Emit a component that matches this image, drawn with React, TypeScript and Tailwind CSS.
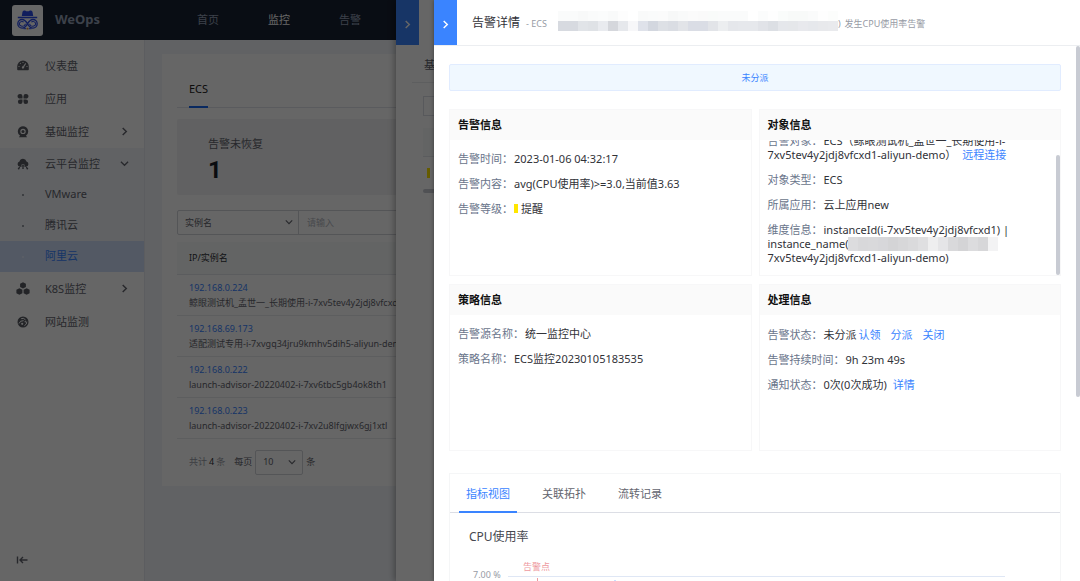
import React from "react";

const ChevronRight = ({ className = "" }: { className?: string }) => (
  <svg viewBox="0 0 10 10" className={className} fill="none" stroke="currentColor" strokeWidth="1.6">
    <path d="M3 1l4 4-4 4" />
  </svg>
);

const ChevronDown = ({ className = "" }: { className?: string }) => (
  <svg viewBox="0 0 10 10" className={className} fill="none" stroke="currentColor" strokeWidth="1.4">
    <path d="M1 3l4 4 4-4" />
  </svg>
);

const Logo = () => (
  <svg viewBox="0 0 31 31" className="size-[31px] rounded-[3px] bg-white">
    <path d="M10.500 6.800q1-1.800 2.600-1.200l1.200.6h2.400l1.200-.6q1.600-.6 2.600 1.200l.7 4.200H9.800z" fill="#2b4be8" />
    <path d="M5.800 11.800h19.400v1.500H5.800z" fill="#2b4be8" />
    <g fill="none" stroke="#2b4be8" strokeWidth="1.300">
      <path d="M15.500 18.800c-1.800-3-3.400-4.300-5.400-4.300a4.300 4.300 0 0 0 0 8.600c2 0 3.600-1.300 5.400-4.300s3.400-4.300 5.400-4.300a4.300 4.300 0 0 1 0 8.600c-2 0-3.600-1.300-5.400-4.300z" />
      <path d="M13.300 18.800a3 2.300 0 1 1-1.600-1.900M17.700 18.800a3 2.300 0 1 0 1.600-1.900" strokeWidth="1.100" />
      <path d="M11.500 23.700h2.800M16.700 23.700h2.800" strokeWidth="1" />
    </g>
    <circle cx="15.500" cy="23.700" r=".9" fill="#e8912b" />
  </svg>
);

const GaugeIcon = () => (
  <svg viewBox="0 0 12 12" className="size-3" fill="currentColor">
    <path
      fillRule="evenodd"
      d="M6 .5A5.800 5.800 0 0 0 .2 6.300v3.200q0 .8.800.8h10q.8 0 .8-.8V6.300A5.800 5.800 0 0 0 6 .5zM5.500 1.900h1v1h-1zM2.700 3.400l.7-.7.7.7-.7.7zM1.500 6.100h1v1h-1zM9.500 6.100h1v1h-1zM8.400 3l.7.7-2 3.200a1.200 1.200 0 1 1-1-.7z"
    />
  </svg>
);

const AppsIcon = () => (
  <svg viewBox="0 0 12 12" className="size-3" fill="currentColor">
    <path d="M3.300 1A2.300 2.300 0 1 0 3.300 5.500H5.500V3.300A2.300 2.300 0 0 0 3.300 1zM8.700 1A2.300 2.300 0 0 0 6.500 3.300V5.500H8.700A2.300 2.300 0 1 0 8.700 1zM3.300 6.500A2.300 2.300 0 1 0 5.500 8.700V6.500zM6.500 6.500V8.700A2.300 2.300 0 1 0 8.700 6.500z" />
  </svg>
);

const CameraIcon = () => (
  <svg viewBox="0 0 12 12" className="size-3" fill="currentColor">
    <path
      fillRule="evenodd"
      d="M6 .2a5.200 5.200 0 0 0-3 9.400l-1 1.600h8L9 9.600A5.200 5.200 0 0 0 6 .2zM6 2.700a2.700 2.700 0 1 1 0 5.400 2.700 2.700 0 0 1 0-5.400z"
    />
    <circle cx="6" cy="5.400" r="1.500" />
  </svg>
);

const CloudIcon = () => (
  <svg viewBox="0 0 12 12" className="size-3" fill="currentColor">
    <path d="M6 .8a3.600 3.600 0 0 0-3.500 2.700A2.600 2.600 0 0 0 2.900 8.600h6.200a2.600 2.600 0 0 0 .4-5.100A3.600 3.600 0 0 0 6 .8z" />
    <path d="M3.500 8L1.500 10.800M8.500 8l2 2.800M6 8v2.500" stroke="currentColor" strokeWidth="1" />
    <circle cx="1.700" cy="10.500" r=".9" />
    <circle cx="10.300" cy="10.500" r=".9" />
    <circle cx="6" cy="10.300" r=".8" />
    <path d="M4 7.400q2-1.800 4 0" stroke="#fff" strokeWidth=".7" fill="none" />
  </svg>
);

const HexIcon = () => (
  <svg viewBox="0 0 14 13" className="h-[13px] w-[14px]" fill="currentColor">
    <path d="M7 .2l2.900 1.600v3.200L7 6.600 4.100 5V1.800zM3.400 6.200l3 1.600v3.400l-3 1.600-3-1.600V7.800zM10.600 6.200l3 1.600v3.400l-3 1.600-3-1.600V7.800z" />
  </svg>
);

const GlobeIcon = () => (
  <svg viewBox="0 0 12 12" className="size-3">
    <circle cx="6" cy="6" r="5.500" fill="currentColor" />
    <path
      d="M4.200 2.600Q7 1.600 8.600 4M2 7.500Q3 4.500 6.600 4.600M7.400 9.700Q10 8.500 9.800 5.600"
      fill="none"
      stroke="#fff"
      strokeWidth="1"
    />
    <circle cx="5.200" cy="7.800" r="1.100" fill="#fff" />
    <circle cx="8.300" cy="5.800" r=".8" fill="#fff" />
  </svg>
);

type RowProps = { icon: React.ReactNode; label: string; arrow?: React.ReactNode; tall?: boolean };
const NavRow = ({ icon, label, arrow, tall = true }: RowProps) => (
  <a href="#" className={`flex items-center pr-[15px] pl-[16px] ${tall ? "h-[33px]" : "h-[31px]"}`}>
    <span className="flex w-[14px] justify-center text-[#585b63]">{icon}</span>
    <span className="ml-[15px] flex-1 pt-px">{label}</span>
    {arrow}
  </a>
);

const SubRow = ({ label, active = false }: { label: string; active?: boolean }) => (
  <a
    href="#"
    className={`flex h-[31px] items-center pl-[16px] ${active ? "bg-[#cfdffb] text-[#3a84ff]" : ""}`}
  >
    <span className="flex w-[14px] justify-center">
      <span className={`size-[2px] rounded-full ${active ? "bg-[#e9f0ff]" : "bg-[#7b7f88]"}`} />
    </span>
    <span className="ml-[15px]">{label}</span>
  </a>
);

const instances = [
  ["192.168.0.224", "鲸眼测试机_孟世一_长期使用-i-7xv5tev4y2jdj8vfcxd1-aliyun-demo"],
  ["192.168.69.173", "适配测试专用-i-7xvgq34jru9kmhv5dih5-aliyun-demo"],
  ["192.168.0.222", "launch-advisor-20220402-i-7xv6tbc5gb4ok8th1"],
  ["192.168.0.223", "launch-advisor-20220402-i-7xv2u8lfgjwx6gj1xtl"],
];

const Card = ({ title, children }: { title: string; children: React.ReactNode }) => (
  <section className="flex h-[167px] flex-col border border-[#f7f7f8]">
    <h2 className="flex h-[30px] shrink-0 items-center bg-[#fafafa] px-2 pt-px font-bold text-[#111]">{title}</h2>
    {children}
  </section>
);

const Field = ({ label, children }: { label: string; children: React.ReactNode }) => (
  <div className="leading-[14px] text-[#313238]">
    <span className="mr-px text-[#69748a]">{label}：</span>
    {children}
  </div>
);

const Link = ({ children }: { children: React.ReactNode }) => (
  <a href="#" className="text-[#3a84ff]">
    {children}
  </a>
);

const Mosaic = ({ rows, size }: { rows: string[][]; size: string }) => (
  <span className="flex flex-col" aria-hidden="true">
    {rows.map((row, y) => (
      <span key={y} className="flex">
        {row.map((c, x) => (
          <span key={x} className={size} style={{ backgroundColor: c }} />
        ))}
      </span>
    ))}
  </span>
);

const titleMosaic = [
  "#fafbfb #fafbfb #f8f9f9 #fafbfb #fbfcfc #f9fafa #fdfdfd #ffffff #f9fafa #fafbfb #fbfbfb #f7f8f8 #f9fafa #fbfbfb #fafafa #f9fbfa #fafbfb #fafbfb #fafbfb #ffffff #fbfcfc #fefefe #fafcfb #f8faf9 #f8faf9 #fafbfb #fefefe #fcfdfc".split(" "),
  "#d7dae0 #d7dae0 #e1e4e8 #dfe2e6 #e9ebef #d5d7dc #e6e8ec #f7f7f9 #dfe2ea #d3d7df #dde0e5 #dadde3 #e2e4e8 #dadde5 #dadde5 #e2e4e8 #eceef0 #e5e7eb #e6e8ec #e6e8ec #e1e3e8 #dcdfe4 #e5e7eb #e5e7ea #e8e9ed #e6e8ec #e8e9ec #e9eaed".split(" "),
];

const nameMosaic = [
  "#dcdcde #d8d8da #d9d9db #d7d7da #d4d4d6 #d7d7d9 #dadadc #dfdfe1 #eeeeef #e5e5e7 #d9d9db #d4d4d6 #dcdcde #d7d7d9 #f3f3f4".split(" "),
];

export default function App() {
  return (
    <div className="relative h-screen overflow-hidden bg-[#f3f6fb] font-['Noto_Sans','Noto_Sans_CJK_SC',sans-serif] text-[11px] text-[#63656e]">
      <div className="flex h-full flex-col">
        <header className="flex h-10 shrink-0 items-center bg-[#182132] pl-3 text-[#96a2b9]">
          <Logo />
          <strong className="ml-3 w-[142px] text-[13px]">WeOps</strong>
          <nav className="flex gap-[49px] pt-px">
            <a href="#">首页</a>
            <a href="#" className="text-white">监控</a>
            <a href="#">告警</a>
          </nav>
        </header>
        <div className="flex min-h-0 flex-1">
          <aside className="flex w-[145px] shrink-0 flex-col border-r border-[#e6e9f0] bg-white pt-[9px]">
            <NavRow icon={<GaugeIcon />} label="仪表盘" />
            <NavRow icon={<AppsIcon />} label="应用" />
            <NavRow icon={<CameraIcon />} label="基础监控" arrow={<ChevronRight className="size-[9px]" />} />
            <div className="bg-[#f3f6fb]">
              <NavRow icon={<CloudIcon />} label="云平台监控" tall={false} arrow={<ChevronDown className="size-[9px]" />} />
              <SubRow label="VMware" />
              <SubRow label="腾讯云" />
              <SubRow label="阿里云" active />
            </div>
            <NavRow icon={<HexIcon />} label="K8S监控" arrow={<ChevronRight className="size-[9px]" />} />
            <NavRow icon={<GlobeIcon />} label="网站监测" />
            <button className="mt-auto mb-[15px] ml-[16px] w-3" aria-label="收起">
              <svg viewBox="0 0 12 12" className="size-3" fill="none" stroke="currentColor" strokeWidth="1.400">
                <path d="M1.500 2.500v7M11.500 6H4M7 3L4 6l3 3" />
              </svg>
            </button>
          </aside>
          <main className="min-w-0 flex-1 overflow-hidden pt-[14px] pr-4 pl-[17px]">
            <div className="bg-white px-[15px] pt-[23px] pb-[11px]">
              <div className="flex border-b border-[#e2e4ea] pl-3">
                <button className="-mb-px h-[31px] border-b-2 border-[#1768ef] pb-1 text-[#222]">ECS</button>
              </div>
              <div className="mt-[11px] h-[76px] rounded-[2px] bg-[#f2f2f4] px-[31px] pt-[17px]">
                <div className="leading-4">告警未恢复</div>
                <div className="mt-1 font-['Roboto',sans-serif] text-[24px] leading-7 font-bold text-[#1b1f29]">1</div>
              </div>
              <div className="mt-[15px] flex text-[9px]">
                <div className="relative w-[122px]">
                  <select aria-label="搜索字段" className="h-[25px] w-full appearance-none rounded-l-[2px] border border-[#d2d4da] px-[7px]">
                    <option>实例名</option>
                  </select>
                  <ChevronDown className="pointer-events-none absolute top-2 right-[6px] size-[8px]" />
                </div>
                <input aria-label="关键字" placeholder="请输入" className="-ml-px h-[25px] flex-1 border border-[#d2d4da] px-2 placeholder:text-[#b4b7c0]" />
              </div>
              <table className="mt-[7px] w-full table-fixed text-left text-[9px]">
                <thead>
                  <tr className="h-8 border-b border-[#e4e6eb] bg-[#f8fbfa] text-[#313238]">
                    <th className="pl-3 font-normal">IP/实例名</th>
                  </tr>
                </thead>
                <tbody>
                  {instances.map(([ip, name]) => (
                    <tr key={ip} className="h-[41px] border-b border-[#e8eaee]">
                      <td className="overflow-hidden pl-3 leading-[15px] whitespace-nowrap">
                        <a href="#" className="block text-[#3a84ff]">{ip}</a>
                        {name}
                      </td>
                    </tr>
                  ))}
                </tbody>
              </table>
              <div className="mt-[11px] flex items-center pl-3 text-[9px]">
                <span className="text-[#979ba5]">共计<span className="px-[2px] text-[#313238]">4</span>条</span>
                <label htmlFor="page-size" className="mr-[3px] ml-[9px]">每页</label>
                <div className="relative">
                  <select id="page-size" className="h-[25px] w-12 appearance-none rounded-[2px] border border-[#d2d4da] px-[7px]">
                    <option>10</option>
                  </select>
                  <ChevronDown className="pointer-events-none absolute top-2 right-[7px] size-[8px]" />
                </div>
                <span className="ml-[3px]">条</span>
              </div>
            </div>
          </main>
        </div>
      </div>

      <div className="absolute inset-y-0 right-0 left-[396px] bg-white shadow-[-2px_0_6px_rgba(0,0,0,0.3)]">
        <button className="flex h-[45px] w-[23px] items-center justify-center bg-[#3a84ff] pt-1 text-white" aria-label="关闭基本信息">
          <ChevronRight className="size-[9px]" />
        </button>
        <div className="ml-4 border-b border-[#e8eaee] pt-3 pb-[9px] pl-[12px] leading-4">基本信息</div>
        <div className="pl-[27px]">
          <div className="mt-[13px] h-5 border border-[#dcdee5]" />
          <div className="mt-3 h-[29px] border-b border-[#e4e6eb] bg-[#f8fbfa]" />
          <div className="mt-[11px] ml-1 h-[10px] w-[3px] bg-[#ffe600]" />
          <div className="mt-[11px] h-1 rounded-full bg-[#c8cbd3]" />
        </div>
      </div>

      <div className="absolute inset-0 bg-black/60" />

      <div role="dialog" aria-label="告警详情" className="absolute inset-y-0 right-0 left-[434px] flex flex-col bg-white shadow-[0_0_4px_rgba(0,0,0,0.4)]">
        <header className="flex h-[46px] shrink-0 items-center border-b border-[#eceef1]">
          <button className="flex h-[45px] w-[23px] items-center justify-center bg-[#3a84ff] pt-1 text-white" aria-label="关闭告警详情">
            <ChevronRight className="size-[9px]" />
          </button>
          <h1 className="ml-[15px] pt-px text-[12px] text-[#313238]">告警详情</h1>
          <span className="ml-[6px] pt-[2px] text-[9px] text-[#979ba5]">- ECS</span>
          <span className="ml-[11px] pb-[3px]">
            <Mosaic rows={titleMosaic} size="size-[10px]" />
          </span>
          <span className="pt-[2px] text-[9px] text-[#979ba5]">)</span>
          <span className="ml-1 pt-[2px] text-[9px] text-[#979ba5]">发生CPU使用率告警</span>
        </header>
        <div className="relative min-h-0 flex-1 overflow-hidden pt-[18px] pr-[19px] pl-[15px]">
          <div className="flex h-[27px] items-center justify-center rounded-[2px] border border-[#e1ecff] bg-[#f0f8ff] text-[9px] text-[#3a84ff]">
            未分派
          </div>
          <div className="mt-[18px] grid grid-cols-2 gap-x-[7px] gap-y-2">
            <Card title="告警信息">
              <div className="flex flex-col gap-[11px] px-2 pt-3">
                <Field label="告警时间">2023-01-06 04:32:17</Field>
                <Field label="告警内容">avg(CPU使用率)&gt;=3.0,当前值3.63</Field>
                <Field label="告警等级">
                  <span className="mr-[3px] inline-block h-[9px] w-[4px] bg-[#ffe600]" />
                  提醒
                </Field>
              </div>
            </Card>
            <Card title="对象信息">
              <div className="relative flex min-h-0 flex-1 flex-col justify-end gap-[11px] overflow-hidden px-2 pb-[10px]">
                <Field label="告警对象">
                  ECS（鲸眼测试机_孟世一_长期使用-i-
                  <br />
                  7xv5tev4y2jdj8vfcxd1-aliyun-demo）
                  <span className="ml-[6px]"><Link>远程连接</Link></span>
                </Field>
                <Field label="对象类型">ECS</Field>
                <Field label="所属应用">云上应用new</Field>
                <Field label="维度信息">
                  instanceId(i-7xv5tev4y2jdj8vfcxd1) |
                  <br />
                  <span className="flex items-center">
                    instance_name(
                    <Mosaic rows={nameMosaic} size="h-[14px] w-[10px]" />
                  </span>
                  7xv5tev4y2jdj8vfcxd1-aliyun-demo)
                </Field>
                <div className="absolute right-0 bottom-0 h-[120px] w-1 rounded-full bg-[#c8cbd3]" />
              </div>
            </Card>
            <Card title="策略信息">
              <div className="flex flex-col gap-[11px] px-2 pt-3">
                <Field label="告警源名称">统一监控中心</Field>
                <Field label="策略名称">ECS监控20230105183535</Field>
              </div>
            </Card>
            <Card title="处理信息">
              <div className="flex flex-col gap-[11px] px-2 pt-[13px]">
                <Field label="告警状态">
                  未分派
                  <span className="ml-[2px] inline-flex gap-[10px]">
                    <Link>认领</Link>
                    <Link>分派</Link>
                    <Link>关闭</Link>
                  </span>
                </Field>
                <Field label="告警持续时间">9h 23m 49s</Field>
                <Field label="通知状态">
                  0次(0次成功)
                  <span className="ml-[6px]"><Link>详情</Link></span>
                </Field>
              </div>
            </Card>
          </div>
          <section className="mt-[22px] border border-[#f5f6f7]">
            <div role="tablist" className="flex gap-[18px] border-b border-[#dcdee5] pl-[9px]">
              <button role="tab" aria-selected="true" className="-mb-px h-[39px] border-b-2 border-[#3a84ff] px-[7px] pt-[3px] text-[#3a84ff]">
                指标视图
              </button>
              <button role="tab" aria-selected="false" className="px-[7px] pt-[3px]">关联拓扑</button>
              <button role="tab" aria-selected="false" className="px-[7px] pt-[3px]">流转记录</button>
            </div>
            <div className="px-[19px] pt-4">
              <h3 className="text-[12px] leading-4 text-[#46484f]">CPU使用率</h3>
              <svg className="mt-3 h-[120px] w-full" role="img" aria-label="CPU使用率">
                <text x="54" y="13" fontSize="9" fill="#ee9a9f">告警点</text>
                <text x="4" y="21" fontSize="9" fill="#979ba5">7.00 %</text>
                <path d="M39 19.500H536" stroke="#dfe7f5" />
                <path d="M68.500 21v100" stroke="#ee9a9f" />
                <path d="M70 60L146 24L220 58L300 48" stroke="#3a84ff" fill="none" />
              </svg>
            </div>
          </section>
          <div className="absolute top-0 right-0 h-[351px] w-1 rounded-full bg-[#c8cbd3]" />
        </div>
      </div>
    </div>
  );
}
